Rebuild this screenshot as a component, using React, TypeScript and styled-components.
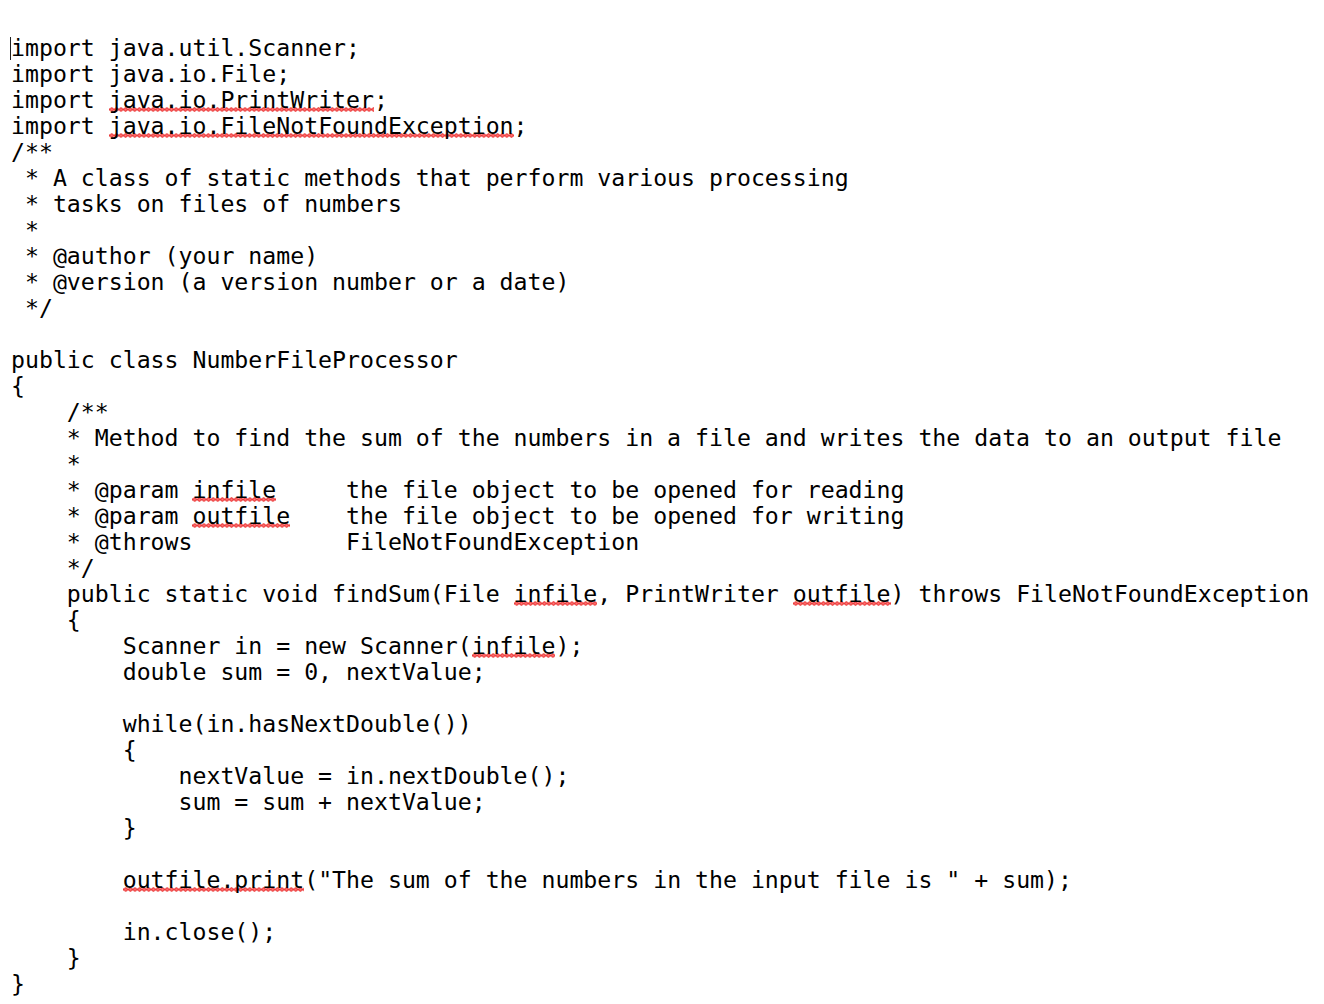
import React from "react";
import styled, { createGlobalStyle } from "styled-components";

const Global = createGlobalStyle`
  html, body { margin: 0; padding: 0; background: #ffffff; }
  #root { min-height: 1004px; }
`;

const Editor = styled.div`
  box-sizing: border-box;
  width: 1324px;
  height: 1004px;
  padding: 35px 0 0 11px;
  background: #ffffff;
  overflow: hidden;
  font-family: "DejaVu Sans Mono", "Liberation Mono", monospace;
  font-size: 23.2px;
  line-height: 26px;
  color: #000000;
`;

const Line = styled.div`
  position: relative;
  height: 26px;
  white-space: pre;
`;

const Caret = styled.span`
  position: absolute;
  left: -1px;
  top: 2px;
  width: 1px;
  height: 23px;
  background: #222222;
`;

const Misspelled = styled.span`
  background-image: radial-gradient(
    circle at 50% 50%,
    #ff7a7a 0,
    #f24848 1.4px,
    #e83a3a 1.9px,
    rgba(232, 58, 58, 0.35) 2.2px,
    transparent 2.5px
  );
  background-size: 4.6px 5px;
  background-repeat: repeat-x;
  background-position: 0.5px calc(100% - 1px);
`;

type Seg = string | { bad: string };

const lines: Seg[][] = [
  ["import java.util.Scanner;"],
  ["import java.io.File;"],
  ["import ", { bad: "java.io.PrintWriter" }, ";"],
  ["import ", { bad: "java.io.FileNotFoundException" }, ";"],
  ["/**"],
  [" * A class of static methods that perform various processing"],
  [" * tasks on files of numbers"],
  [" *"],
  [" * @author (your name)"],
  [" * @version (a version number or a date)"],
  [" */"],
  [""],
  ["public class NumberFileProcessor"],
  ["{"],
  ["    /**"],
  ["    * Method to find the sum of the numbers in a file and writes the data to an output file"],
  ["    *"],
  ["    * @param ", { bad: "infile" }, "     the file object to be opened for reading"],
  ["    * @param ", { bad: "outfile" }, "    the file object to be opened for writing"],
  ["    * @throws           FileNotFoundException"],
  ["    */"],
  ["    public static void findSum(File ", { bad: "infile" }, ", PrintWriter ", { bad: "outfile" }, ") throws FileNotFoundException"],
  ["    {"],
  ["        Scanner in = new Scanner(", { bad: "infile" }, ");"],
  ["        double sum = 0, nextValue;"],
  [""],
  ["        while(in.hasNextDouble())"],
  ["        {"],
  ["            nextValue = in.nextDouble();"],
  ["            sum = sum + nextValue;"],
  ["        }"],
  [""],
  ["        ", { bad: "outfile.print" }, "(\"The sum of the numbers in the input file is \" + sum);"],
  [""],
  ["        in.close();"],
  ["    }"],
  ["}"],
];

export default function App() {
  return (
    <>
      <Global />
      <Editor>
        {lines.map((segs, i) => (
          <Line key={i}>
            {i === 0 && <Caret />}
            {segs.map((s, j) =>
              typeof s === "string" ? (
                <React.Fragment key={j}>{s}</React.Fragment>
              ) : (
                <Misspelled key={j}>{s.bad}</Misspelled>
              )
            )}
            {segs.length === 1 && segs[0] === "" ? "\u00a0" : null}
          </Line>
        ))}
      </Editor>
    </>
  );
}
